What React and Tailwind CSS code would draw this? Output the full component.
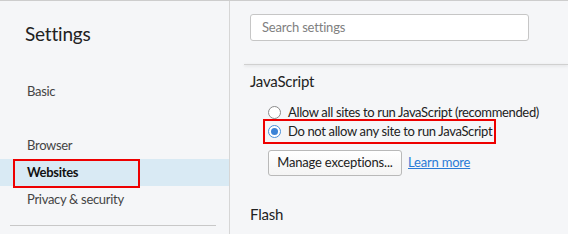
import React from 'react';

const font = { fontFamily: 'Lato, "Noto Sans", sans-serif' };

const NavItem = ({ label, active }) => (
    <div className={`relative h-[27px] flex items-center pl-[27px] text-[13px] tracking-[-0.3px] ${active ? 'bg-[#d9eaf4] font-bold text-[#111]' : 'text-[#444]'}`}>
        {label}
        {active && <div className="absolute left-[13px] top-0 w-[127px] h-[29px] border-2 border-[#ee0000]" />}
    </div>
);

const Radio = ({ checked }) => (
    <span className={`w-[13px] h-[13px] rounded-full border flex items-center justify-center shrink-0 ${checked ? 'border-[#4a90d9] bg-white' : 'border-[#8a8a8a] bg-white'}`}>
        {checked && <span className="w-[7px] h-[7px] rounded-full bg-[#3b83d6]" />}
    </span>
);

const App = () => {
    return (
        <div className="w-[568px] h-[234px] bg-[#f5f6f8] border-t border-[#cdcdcd] flex overflow-hidden" style={font}>
            <aside className="w-[230px] h-full border-r border-[#d6d6d6] flex flex-col">
                <h1 className="pl-[25px] pt-[20px] text-[19px] leading-[26px] tracking-[-0.2px] text-[#222]">Settings</h1>
                <nav className="mt-[31px]">
                    <NavItem label="Basic" />
                    <div className="h-[27px]" />
                    <NavItem label="Browser" />
                    <NavItem label="Websites" active />
                    <NavItem label="Privacy & security" />
                </nav>
                <div className="mt-[12px] mx-[10px] w-[206px] h-px bg-[#c8c8c8]" />
            </aside>

            <main className="flex-1 h-full flex flex-col">
                <div className="h-[63px] pt-[13px] pl-[20px]">
                    <div className="w-[279px] h-[27px] bg-white border border-[#c6c6c6] rounded-[3px] flex items-center pl-[11px] text-[13px] tracking-[-0.2px] text-[#808080]">
                        Search settings
                    </div>
                </div>
                <div className="ml-[14px] h-px bg-[#d0d0d0] shadow-[0_1px_3px_rgba(0,0,0,0.15)]" />

                <section className="pl-[20px] pt-[6px]">
                    <h2 className="text-[15px] leading-[20px] tracking-[-0.2px] text-[#222]">JavaScript</h2>
                    <div className="mt-[12px] ml-[18px] flex flex-col text-[13px] tracking-[-0.35px] text-[#222]">
                        <label className="flex items-center gap-[7px] h-[19px] whitespace-nowrap">
                            <Radio />
                            Allow all sites to run JavaScript (recommended)
                        </label>
                        <label className="relative flex items-center gap-[7px] h-[19px] whitespace-nowrap">
                            <Radio checked />
                            Do not allow any site to run JavaScript
                            <span className="absolute -left-[5px] -top-[3px] w-[233px] h-[25px] border-2 border-[#ee0000]" />
                        </label>
                        <div className="mt-[9px] flex items-center gap-[6px] tracking-[-0.2px]">
                            <button className="w-[134px] h-[26px] bg-gradient-to-b from-white to-[#f4f4f4] border border-[#b9b9b9] rounded-[3px] text-[#222] whitespace-nowrap">
                                Manage exceptions...
                            </button>
                            <a className="text-[#2a7bd6] underline whitespace-nowrap">Learn more</a>
                        </div>
                    </div>
                    <h2 className="mt-[28px] text-[15px] leading-[20px] tracking-[-0.2px] text-[#222]">Flash</h2>
                </section>
            </main>
        </div>
    );
};

export default App;
